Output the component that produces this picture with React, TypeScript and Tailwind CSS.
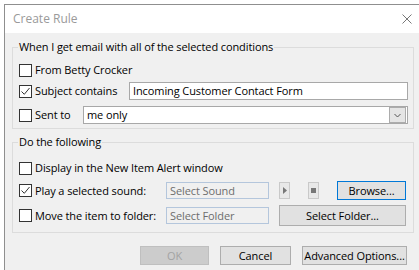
import React from "react";

const font = { fontFamily: '"Open Sans", "Noto Sans", sans-serif' };

function Check({ checked }: { checked?: boolean }) {
  return (
    <div className="w-[13px] h-[13px] border border-[#333333] bg-white flex items-center justify-center shrink-0">
      {checked && (
        <svg width="11" height="11" viewBox="0 0 11 11">
          <path d="M1.5 5.5 L4.3 8.3 L9.5 2" fill="none" stroke="#333" strokeWidth="1" />
        </svg>
      )}
    </div>
  );
}

function Btn({ children, className = "" }: { children?: React.ReactNode; className?: string }) {
  return (
    <div className={"flex items-center justify-center border " + className}>
      {children}
    </div>
  );
}

export default function App() {
  return (
    <div className="w-[419px] h-[270px] bg-white overflow-hidden text-[11px] leading-[14px] text-black tracking-[-0.1px]" style={font}>
      <div className="h-[4px] bg-white" />
      <div className="ml-[4px] border-l border-t border-[#8f8f8f] h-[266px] flex flex-col">
        <div className="h-[28px] bg-white flex items-center justify-between pl-[8px] pr-[7px]">
          <span className="text-[#9a9a9a] text-[12px] tracking-normal">Create Rule</span>
          <svg width="10" height="10" viewBox="0 0 10 10">
            <path d="M0.5 0.5 L9.5 9.5 M9.5 0.5 L0.5 9.5" stroke="#777" strokeWidth="1" />
          </svg>
        </div>
        <div className="flex-1 bg-[#f0f0f0] pl-[7px] pr-[5px] pt-[7px]">
          <fieldset className="border border-[#dcdcdc] h-[89px] pl-[6px] pr-[4px]">
            <legend className="ml-[-1px] px-[1px] h-[14px]">When I get email with all of the selected conditions</legend>
            <div className="flex items-center h-[14px] mt-[9px] gap-[3px]">
              <Check />
              <span>From Betty Crocker</span>
            </div>
            <div className="flex items-center h-[18px] mt-[5px]">
              <div className="flex items-center gap-[3px] w-[110px]">
                <Check checked />
                <span>Subject contains</span>
              </div>
              <div className="flex-1 mr-[1px] h-[18px] bg-white border border-[#a8a8a8] flex items-center pl-[3px]">
                Incoming Customer Contact Form
              </div>
            </div>
            <div className="flex items-center h-[18px] mt-[6px]">
              <div className="flex items-center gap-[3px] w-[64px]">
                <Check />
                <span>Sent to</span>
              </div>
              <div className="flex-1 mr-[1px] h-[18px] bg-white border border-[#a8a8a8] flex items-center pl-[3px] justify-between">
                <span>me only</span>
                <div className="w-[17px] h-[16px] mr-[1px] bg-[#e5e5e5] border border-[#acacac] flex items-center justify-center">
                  <svg width="7" height="5" viewBox="0 0 7 5">
                    <path d="M0.5 1 L3.5 4 L6.5 1" fill="none" stroke="#555" strokeWidth="1" />
                  </svg>
                </div>
              </div>
            </div>
          </fieldset>
          <fieldset className="mt-[6px] border border-[#dcdcdc] h-[98px] pl-[6px] pr-[6px]">
            <legend className="ml-[-1px] px-[1px] h-[14px]">Do the following</legend>
            <div className="flex items-center h-[14px] mt-[12px] gap-[3px]">
              <Check />
              <span>Display in the New Item Alert window</span>
            </div>
            <div className="flex items-center h-[19px] mt-[6px]">
              <div className="flex items-center gap-[3px] w-[147px]">
                <Check checked />
                <span>Play a selected sound:</span>
              </div>
              <div className="w-[103px] h-[17px] bg-[#f0f0f0] border border-[#b4c6dc] flex items-center pl-[3px] text-[#6d6d6d]">
                Select Sound
              </div>
              <Btn className="ml-[10px] w-[11px] h-[17px] bg-[#e8e8e8] border-[#c9c9c9]">
                <svg width="4" height="7" viewBox="0 0 4 7">
                  <path d="M0 0 L4 3.5 L0 7 Z" fill="#777" />
                </svg>
              </Btn>
              <Btn className="ml-[18px] w-[11px] h-[17px] bg-[#e8e8e8] border-[#c9c9c9]">
                <div className="w-[5px] h-[5px] bg-[#777]" />
              </Btn>
              <Btn className="ml-[18px] w-[69px] h-[19px] bg-[#e1e1e1] border-[#0078d7] text-black">Browse...</Btn>
            </div>
            <div className="flex items-center h-[21px] mt-[5px]">
              <div className="flex items-center gap-[3px] w-[147px]">
                <Check />
                <span>Move the item to folder:</span>
              </div>
              <div className="w-[103px] h-[17px] bg-[#f0f0f0] border border-[#b4c6dc] flex items-center pl-[3px] text-[#6d6d6d]">
                Select Folder
              </div>
              <Btn className="ml-[10px] w-[127px] h-[21px] bg-[#e1e1e1] border-[#adadad] text-black">Select Folder...</Btn>
            </div>
          </fieldset>
          <div className="flex justify-end gap-[11px] mt-[13px] pr-[7px]">
            <Btn className="w-[69px] h-[19px] bg-[#cccccc] border-[#bfbfbf] text-[#a3a3a3]">OK</Btn>
            <Btn className="w-[71px] h-[19px] bg-[#e1e1e1] border-[#adadad] text-black">Cancel</Btn>
            <Btn className="w-[105px] h-[19px] bg-[#e1e1e1] border-[#adadad] text-black">Advanced Options...</Btn>
          </div>
        </div>
      </div>
    </div>
  );
}
